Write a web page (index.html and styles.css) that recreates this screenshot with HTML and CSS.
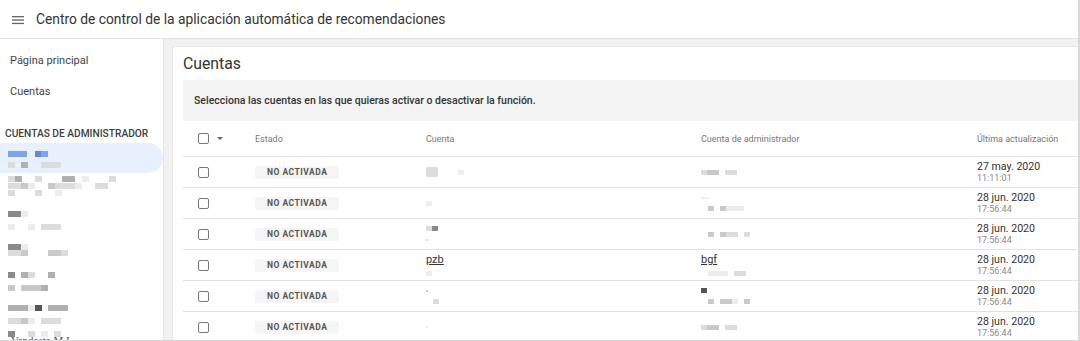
FILE: index.html
```html
<!DOCTYPE html>
<html lang="es">
<head>
  <meta charset="UTF-8" />
  <title>Centro de control</title>
  <link rel="stylesheet" href="styles.css">
</head>
<body>

<!-- TOP BAR -->
<header class="topbar">
  <svg class="menu-icon" width="12" height="10" viewBox="0 0 12 10">
    <rect x="0" y="1" width="12" height="1.3" fill="#666"/>
    <rect x="0" y="4.4" width="12" height="1.3" fill="#666"/>
    <rect x="0" y="7.8" width="12" height="1.3" fill="#666"/>
  </svg>
  <span class="app-title">Centro de control de la aplicación automática de recomendaciones</span>
</header>

<div class="layout">

  <!-- SIDEBAR -->
  <nav class="sidebar">
    <a class="nav-item">Página principal</a>
    <a class="nav-item">Cuentas</a>
    <div class="nav-section">CUENTAS DE ADMINISTRADOR</div>

    <div class="mgr selected">
      <div class="pxrow"><i class="b blue w19"></i><i class="gap8"></i><i class="b blue2 w6"></i><i class="b blue w7"></i></div>
      <div class="pxrow"><i class="b g2 w7"></i><i class="gap6"></i><i class="b g4 w7"></i><i class="gap13"></i><i class="b g2 w20"></i></div>
    </div>
    <div class="mgr tight">
      <div class="pxrow"><i class="b g2 w7"></i><i class="b g4 w7"></i><i class="gap13"></i><i class="b g2 w7"></i><i class="gap20"></i><i class="b g4 w13"></i><i class="gap7"></i><i class="b g1 w7"></i><i class="gap20"></i><i class="b g2 w7"></i></div>
      <div class="pxrow"><i class="b g2 w13"></i><i class="b g3 w7"></i><i class="b g1 w7"></i><i class="gap13"></i><i class="b g3 w7"></i><i class="b g2 w20"></i><i class="b g1 w7"></i><i class="gap13"></i><i class="b g2 w13"></i></div>
      <div class="pxrow"><i class="b g2 w7"></i><i class="gap20"></i><i class="b g2 w7"></i><i class="gap13"></i><i class="b g1 w7"></i></div>
    </div>
    <div class="mgr mt15">
      <div class="pxrow"><i class="b g5 w13"></i><i class="b g1 w7"></i></div>
      <div class="pxrow"><i class="b g1 w7"></i><i class="gap13"></i><i class="b g1 w7"></i><i class="gap6"></i><i class="b g2 w20"></i></div>
    </div>
    <div class="mgr flush mt14">
      <div class="pxrow"><i class="b g5 w13"></i><i class="b g1 w7"></i></div>
      <div class="pxrow"><i class="b g2 w13"></i><i class="b g3 w7"></i><i class="gap20"></i><i class="b g3 w13"></i><i class="b g2 w7"></i></div>
    </div>
    <div class="mgr mt16">
      <div class="pxrow"><i class="b g5 w7"></i><i class="gap6"></i><i class="b g4 w7"></i><i class="b g2 w7"></i><i class="gap13"></i><i class="b g4 w7"></i></div>
      <div class="pxrow"><i class="b g3 w7"></i><i class="gap6"></i><i class="b g3 w20"></i><i class="b g4 w7"></i></div>
    </div>
    <div class="mgr mt14">
      <div class="pxrow"><i class="b g4 w20"></i><i class="b g1 w7"></i><i class="b g6 w7"></i><i class="gap6"></i><i class="b g4 w20"></i></div>
      <div class="pxrow"><i class="b g2 w13"></i><i class="b g3 w7"></i><i class="b g1 w7"></i><i class="gap6"></i><i class="b g2 w20"></i></div>
      <div class="pxrow"><i class="b g5 w7"></i><i class="gap13"></i><i class="b g2 w7"></i><i class="gap6"></i><i class="b g1 w7"></i><i class="gap6"></i><i class="b g2 w7"></i></div>
      <div class="cut-name">Vendasta M.L.</div>
    </div>
  </nav>

  <!-- MAIN -->
  <main class="main">
    <section class="card">
      <h1 class="card-title">Cuentas</h1>
      <div class="banner">Selecciona las cuentas en las que quieras activar o desactivar la función.</div>

      <div class="table">
        <div class="trow thead">
          <div class="cell check-cell"><span class="checkbox"></span><span class="caret"></span></div>
          <div class="cell">Estado</div>
          <div class="cell">Cuenta</div>
          <div class="cell">Cuenta de administrador</div>
          <div class="cell">Última actualización</div>
        </div>

        <div class="trow">
          <div class="cell check-cell"><span class="checkbox"></span></div>
          <div class="cell"><span class="chip">NO ACTIVADA</span></div>
          <div class="cell acct"><div class="pxrow"><i class="b g2 w12 tall"></i><i class="gap20"></i><i class="b g1 w6"></i></div></div>
          <div class="cell acct"><div class="pxrow"><i class="b g2 w6"></i><i class="b g3 w12"></i><i class="gap6"></i><i class="b g2 w12"></i></div></div>
          <div class="cell date"><span class="day">27 may. 2020</span><span class="time">11:11:01</span></div>
        </div>

        <div class="trow">
          <div class="cell check-cell"><span class="checkbox"></span></div>
          <div class="cell"><span class="chip">NO ACTIVADA</span></div>
          <div class="cell acct"><div class="pxrow"><i class="b g1 w6"></i></div></div>
          <div class="cell acct"><div class="pxrow"><i class="b g1 w8 thin"></i></div><div class="pxrow ind"><i class="b g3 w6"></i><i class="gap6"></i><i class="b g3 w6"></i><i class="b g1 w12"></i><i class="b g1 w6"></i></div></div>
          <div class="cell date"><span class="day">28 jun. 2020</span><span class="time">17:56:44</span></div>
        </div>

        <div class="trow">
          <div class="cell check-cell"><span class="checkbox"></span></div>
          <div class="cell"><span class="chip">NO ACTIVADA</span></div>
          <div class="cell acct"><div class="pxrow"><i class="b g2 w6"></i><i class="b g5 w6"></i></div><div class="pxrow"><i class="b g2 dot"></i></div></div>
          <div class="cell acct"><div class="pxrow ind"><i class="b g3 w6"></i><i class="gap6"></i><i class="b g3 w6"></i><i class="b g2 w12"></i><i class="gap6"></i><i class="b g2 w6"></i></div></div>
          <div class="cell date"><span class="day">28 jun. 2020</span><span class="time">17:56:44</span></div>
        </div>

        <div class="trow">
          <div class="cell check-cell"><span class="checkbox"></span></div>
          <div class="cell"><span class="chip">NO ACTIVADA</span></div>
          <div class="cell acct"><span class="name">pzb</span><div class="pxrow"><i class="b g1 w6"></i></div></div>
          <div class="cell acct"><span class="name">bgf</span><div class="pxrow ind"><i class="b g1 w20"></i><i class="gap6"></i><i class="b g2 w6"></i><i class="b g2 w6"></i></div></div>
          <div class="cell date"><span class="day">28 jun. 2020</span><span class="time">17:56:44</span></div>
        </div>

        <div class="trow">
          <div class="cell check-cell"><span class="checkbox"></span></div>
          <div class="cell"><span class="chip">NO ACTIVADA</span></div>
          <div class="cell acct"><div class="pxrow"><i class="b g3 dot"></i></div><div class="pxrow ind"><i class="b g2 w6"></i></div></div>
          <div class="cell acct"><div class="pxrow"><i class="b g6 w6"></i></div><div class="pxrow ind"><i class="b g3 w6"></i><i class="gap6"></i><i class="b g3 w12"></i><i class="b g1 w6"></i><i class="gap6"></i><i class="b g3 w6"></i></div></div>
          <div class="cell date"><span class="day">28 jun. 2020</span><span class="time">17:56:44</span></div>
        </div>

        <div class="trow">
          <div class="cell check-cell"><span class="checkbox"></span></div>
          <div class="cell"><span class="chip">NO ACTIVADA</span></div>
          <div class="cell acct"><div class="pxrow"><i class="b g1 dot"></i></div></div>
          <div class="cell acct"><div class="pxrow"><i class="b g2 w6"></i><i class="b g3 w12"></i><i class="gap6"></i><i class="b g2 w12"></i></div></div>
          <div class="cell date"><span class="day">28 jun. 2020</span><span class="time">17:56:44</span></div>
        </div>
      </div>
    </section>
  </main>

</div>

</body>
</html>
```

FILE: styles.css
```css
body {
  margin: 0;
  width: 1080px;
  height: 341px;
  overflow: hidden;
  font-family: Roboto, 'Liberation Sans', sans-serif;
  color: #333;
  background-color: #f1f1f1;
  box-sizing: border-box;
  border-right: 2px solid #d9d9d9;
  border-bottom: 1px solid #d9d9d9;
}

/* top bar */
.topbar {
  height: 38px;
  background-color: #fff;
  border-bottom: 1px solid #e2e2e2;
  display: flex;
  align-items: center;
  padding-left: 12px;
}

.menu-icon {
  margin-right: 12px;
  margin-top: 1px;
}

.app-title {
  font-size: 13.8px;
  color: #333;
}

.layout {
  display: flex;
  height: 302px;
}

/* sidebar */
.sidebar {
  width: 163px;
  flex-shrink: 0;
  background-color: #fff;
  border-right: 1px solid #e4e4e4;
  padding-top: 6px;
  overflow: hidden;
}

.nav-item {
  display: flex;
  align-items: center;
  height: 31px;
  padding-left: 10px;
  font-size: 11px;
  color: #444;
}

.nav-section {
  margin-top: 21px;
  padding-left: 5px;
  font-size: 10.2px;
  font-weight: 500;
  color: #3c4043;
}

.mgr {
  padding-left: 8px;
  display: flex;
  flex-direction: column;
  gap: 7px;
}

.mgr.selected {
  margin-top: 4px;
  padding-top: 8px;
  padding-bottom: 5px;
  background-color: #e8f0fe;
  border-radius: 0 16px 16px 0;
  gap: 5px;
}

.mgr.tight {
  margin-top: 3px;
  gap: 1px;
}

.mgr.flush { gap: 0; }
.mt14 { margin-top: 14px; }
.mt15 { margin-top: 15px; }
.mt16 { margin-top: 16px; }

.cut-name {
  font-family: 'Liberation Serif', serif;
  font-size: 11px;
  color: #555;
  margin-top: -10px;
  padding-left: 3px;
}

/* pixelated blocks */
.pxrow {
  display: flex;
  align-items: center;
  height: 6px;
}

.acct .pxrow {
  height: 5px;
}

.pxrow.ind {
  margin-left: 7px;
}

.b {
  display: block;
  height: 100%;
}

.b.tall { height: 10px; }
.b.thin { height: 2px; }
.b.dot { width: 2px; height: 2px; }

.blue { background-color: #7ea3e6; }
.blue2 { background-color: #5b8ae0; }
.g1 { background-color: #ececec; }
.g2 { background-color: #dcdcdc; }
.g3 { background-color: #c9c9c9; }
.g4 { background-color: #b0b0b0; }
.g5 { background-color: #8a8a8a; }
.g6 { background-color: #555; }

.w6 { width: 6px; }
.w7 { width: 7px; }
.w8 { width: 8px; }
.w12 { width: 12px; }
.w13 { width: 13px; }
.w19 { width: 19px; }
.w20 { width: 20px; }

.gap6 { width: 6px; }
.gap7 { width: 7px; }
.gap8 { width: 8px; }
.gap13 { width: 13px; }
.gap20 { width: 20px; }

/* main */
.main {
  flex: 1;
  padding: 7px 0 0 8px;
  overflow: hidden;
}

.card {
  background-color: #fff;
  border-top: 1px solid #e6e6e6;
  border-left: 1px solid #e6e6e6;
  border-radius: 3px 0 0 0;
  padding-left: 10px;
  height: 100%;
}

.card-title {
  margin: 0;
  height: 33px;
  line-height: 34px;
  font-size: 15.8px;
  font-weight: 400;
  color: #333;
}

.banner {
  height: 41px;
  display: flex;
  align-items: center;
  padding-left: 11px;
  background-color: #f4f4f4;
  font-size: 10.5px;
  font-weight: 500;
  color: #333;
}

/* table */
.trow {
  display: grid;
  grid-template-columns: 72px 171px 275px 276px 1fr;
  height: 31px;
  border-top: 1px solid #e3e3e3;
  box-sizing: border-box;
}

.trow.thead {
  height: 35px;
  border-top: none;
  font-size: 9px;
  color: #777;
}

.cell {
  display: flex;
  flex-direction: column;
  justify-content: center;
  align-items: flex-start;
}

.check-cell {
  flex-direction: row;
  align-items: center;
  justify-content: flex-start;
  padding-left: 15px;
}

.checkbox {
  width: 9px;
  height: 9px;
  border: 1.5px solid #777;
  border-radius: 2px;
  display: block;
}

.caret {
  margin-left: 8px;
  width: 0;
  height: 0;
  border-left: 3px solid transparent;
  border-right: 3px solid transparent;
  border-top: 3px solid #666;
}

.chip {
  display: inline-block;
  box-sizing: border-box;
  width: 84px;
  height: 13px;
  padding-left: 12px;
  white-space: nowrap;
  background-color: #f5f5f5;
  line-height: 13px;
  font-size: 8.5px;
  font-weight: 700;
  letter-spacing: 0.5px;
  color: #555;
  border-radius: 2px;
}

.acct {
  gap: 6px;
}

.name {
  font-size: 11px;
  color: #333;
  text-decoration: underline;
  line-height: 11px;
}

.date .day {
  font-size: 10.6px;
  color: #333;
  line-height: 13px;
}

.date .time {
  font-size: 9px;
  color: #888;
  line-height: 11px;
}
```
